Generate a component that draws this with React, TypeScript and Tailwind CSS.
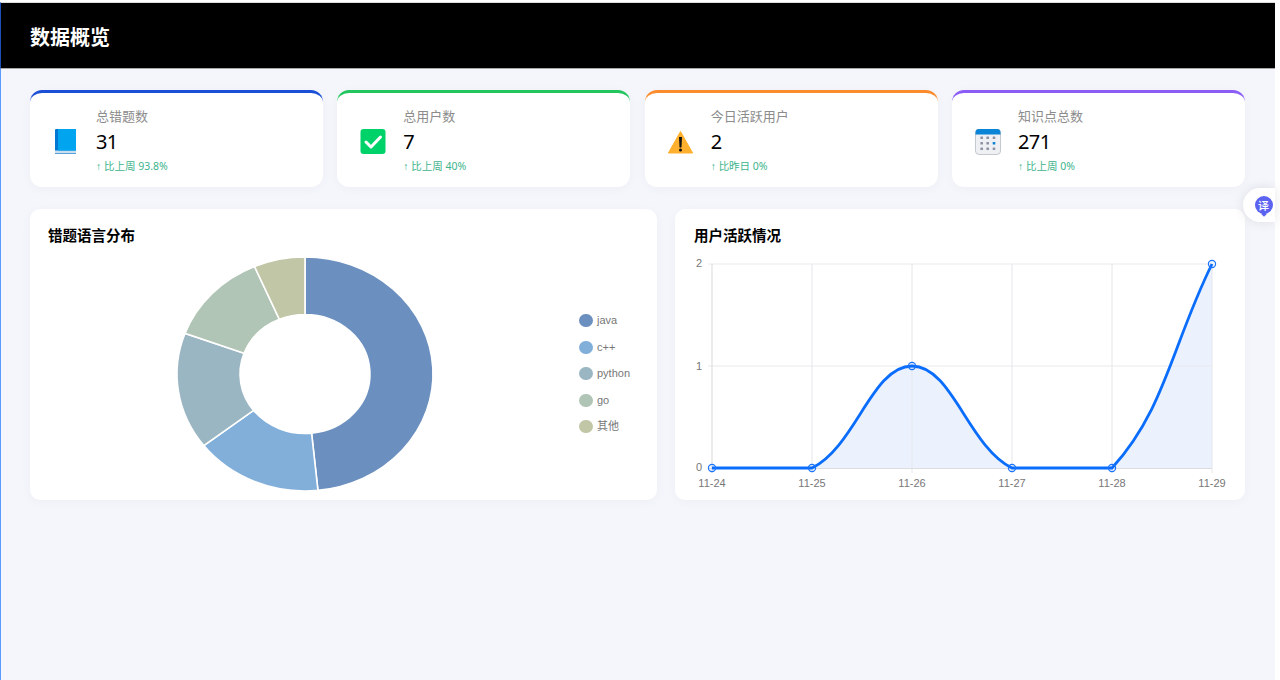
const statCards = [
  { label: '总错题数', value: '31', trend: '比上周 93.8%', border: 'border-t-[#1a4fd6]', icon: 'book' },
  { label: '总用户数', value: '7', trend: '比上周 40%', border: 'border-t-[#22c55e]', icon: 'check' },
  { label: '今日活跃用户', value: '2', trend: '比昨日 0%', border: 'border-t-[#fb8c2e]', icon: 'warning' },
  { label: '知识点总数', value: '271', trend: '比上周 0%', border: 'border-t-[#8b5cf6]', icon: 'calendar' },
]

const languages = [
  { name: 'java', count: 15, color: '#6b8fbf', dot: 'bg-[#6b8fbf]' },
  { name: 'c++', count: 5, color: '#82afda', dot: 'bg-[#82afda]' },
  { name: 'python', count: 5, color: '#9bb6c3', dot: 'bg-[#9bb6c3]' },
  { name: 'go', count: 4, color: '#b0c5b5', dot: 'bg-[#b0c5b5]' },
  { name: '其他', count: 2, color: '#c1c6a7', dot: 'bg-[#c1c6a7]' },
]

const days = [
  { label: '11-24', x: 712, y: 468 },
  { label: '11-25', x: 812, y: 468 },
  { label: '11-26', x: 912, y: 366 },
  { label: '11-27', x: 1012, y: 468 },
  { label: '11-28', x: 1112, y: 468 },
  { label: '11-29', x: 1212, y: 264 },
]

const linePath =
  'M712 468 L812 468 C856 446 872 366 912 366 C952 366 968 446 1012 468 L1112 468 C1165 410 1172 345 1212 264'

const StatIcon = ({ name }: { name: string }) => {
  if (name === 'book') {
    return (
      <svg width="26" height="26" viewBox="0 0 26 26">
        <path d="M2 1a1 1 0 0 1 1-1h19a1 1 0 0 1 1 1v24H3a1 1 0 0 1-1-1z" fill="#0078d4" />
        <rect x="2" y="21.5" width="21" height="3.5" fill="#c9dff0" />
        <rect x="2" y="24.2" width="21" height="0.8" fill="#3f8fcf" />
        <path d="M5 0h17a1 1 0 0 1 1 1v20.5H5z" fill="#00a4ef" />
      </svg>
    )
  }
  if (name === 'check') {
    return (
      <svg width="26" height="26" viewBox="0 0 26 26">
        <rect width="25" height="25" x="0.5" y="0" rx="3" fill="#00d26a" />
        <path d="M6 13l5 5 9.5-10" fill="none" stroke="#fff" strokeWidth="3" strokeLinecap="round" strokeLinejoin="round" />
      </svg>
    )
  }
  if (name === 'warning') {
    return (
      <svg width="26" height="26" viewBox="0 0 26 26">
        <path d="M12.5 2.5L24.6 24H.4z" fill="#ffb02e" stroke="#ffb02e" strokeLinejoin="round" />
        <path d="M11 8h3l-.5 10.5h-2z" fill="#111" />
        <circle cx="12.5" cy="21" r="1.5" fill="#111" />
      </svg>
    )
  }
  return (
    <svg width="26" height="26" viewBox="0 0 26 26">
      <rect x="0.5" y="0" width="25" height="25.5" rx="3.5" fill="#eef0f4" stroke="#c4c8cf" />
      <path d="M0.5 5.5V3.5A3.5 3.5 0 0 1 4 0h18a3.5 3.5 0 0 1 3.5 3.5v2z" fill="#0a84d6" />
      {[5.4, 11.4, 17.7].map((x) =>
        [7.4, 13, 18.4].map((y) => (
          <rect key={`${x}-${y}`} x={x} y={y} width="2.6" height="2.6" rx="0.5" fill={x === 17.7 && y === 13 ? '#0a84d6' : '#8e93a3'} />
        ))
      )}
    </svg>
  )
}

// donut is stretched in the screenshot, so radii differ per axis
const slicePath = (start: number, end: number) => {
  const cx = 305
  const cy = 374
  const point = (angle: number, rx: number, ry: number) =>
    `${(cx + rx * Math.sin(angle)).toFixed(2)} ${(cy - ry * Math.cos(angle)).toFixed(2)}`
  const large = end - start > Math.PI ? 1 : 0
  return `M${point(start, 128, 117)} A128 117 0 ${large} 1 ${point(end, 128, 117)} L${point(end, 65, 59.5)} A65 59.5 0 ${large} 0 ${point(start, 65, 59.5)} Z`
}

const Donut = () => {
  const total = languages.reduce((sum, item) => sum + item.count, 0)
  let current = 0
  return (
    <svg className="w-[515px] h-[245px] flex-none" viewBox="48 250 515 245">
      {languages.map((item) => {
        const start = (current / total) * Math.PI * 2
        current += item.count
        const end = (current / total) * Math.PI * 2
        return <path key={item.name} d={slicePath(start, end)} fill={item.color} stroke="#fff" strokeWidth="1.6" />
      })}
    </svg>
  )
}

const LineChart = () => (
  <svg className="w-[540px] h-[245px] block" viewBox="694 250 540 245">
    <path d={`${linePath} L1212 468 Z`} fill="#ebf2fd" />
    {[264, 366].map((y) => (
      <line key={y} x1="708" x2="1212" y1={y} y2={y} stroke="#e9e9ec" strokeWidth="1" />
    ))}
    {days.slice(1).map((day) => (
      <line key={day.x} x1={day.x} x2={day.x} y1="264" y2="473" stroke="#e6e6ea" strokeWidth="1" />
    ))}
    <line x1="712" x2="712" y1="264" y2="473" stroke="#d9d9dc" strokeWidth="1" />
    <line x1="708" x2="1212" y1="468.5" y2="468.5" stroke="#dcdde0" strokeWidth="1" />
    <path d={linePath} fill="none" stroke="#0b6dfb" strokeWidth="2.8" />
    {days.map((day) => (
      <circle key={day.label} cx={day.x} cy={day.y} r="3.6" fill="#0b6dfb" fillOpacity="0.06" stroke="#1a75fb" strokeWidth="1.2" />
    ))}
    {days.map((day) => (
      <text key={day.label} x={day.x} y="487" textAnchor="middle" fontSize="11" fill="#777" fontFamily="'Liberation Sans', sans-serif">
        {day.label}
      </text>
    ))}
    {[
      ['2', 267],
      ['1', 370],
      ['0', 471],
    ].map(([label, y]) => (
      <text key={label} x="702" y={y} textAnchor="end" fontSize="11" fill="#777" fontFamily="'Liberation Sans', sans-serif">
        {label}
      </text>
    ))}
  </svg>
)

const App = () => {
  return (
    <div className="relative w-[1280px] h-[680px] overflow-hidden bg-white font-['Noto_Sans','Noto_Sans_CJK_SC',sans-serif]">
      <div className="w-[1275px] h-full pt-[2px] flex flex-col">
        <header className="h-[67px] flex-none flex items-center pl-[29px] pt-[4px] bg-black text-white text-[20px] font-bold border-l border-l-[#1d4fb8] border-t border-t-[#dcdcdc] border-b border-b-[#a8a8a8]">
          数据概览
        </header>
        <main className="flex-1 bg-[#f4f6fb] border-l border-l-[#5b9bff] pl-[29px] pr-[30px] pt-[21px]">
          <div className="grid grid-cols-4 gap-[14.3px]">
            {statCards.map((card) => (
              <div
                key={card.label}
                className={`h-[97px] flex items-center pl-[23px] bg-white rounded-[12px] border-t-[3px] shadow-[0_2px_12px_rgba(0,0,0,0.03)] ${card.border}`}
              >
                <div className="w-[26px] flex-none flex mt-[4px]">
                  <StatIcon name={card.icon} />
                </div>
                <div className="ml-[17px] flex flex-col">
                  <span className="text-[13px] leading-[18px] text-[#8c8c8c]">{card.label}</span>
                  <span className="mt-[3px] text-[20px] leading-[28px] tracking-[-0.6px] text-black">{card.value}</span>
                  <span className="mt-[3px] text-[10.5px] leading-[15px] text-[#3db48c]">
                    <span className="font-['Liberation_Sans',sans-serif]">↑</span> {card.trend}
                  </span>
                </div>
              </div>
            ))}
          </div>
          <div className="mt-[22px] flex gap-[18px]">
            <section className="w-[627px] h-[291px] pl-[18px] pt-[17px] bg-white rounded-[10px] shadow-[0_2px_12px_rgba(0,0,0,0.03)]">
              <h2 className="text-[14.5px] leading-[18px] font-bold text-black">错题语言分布</h2>
              <div className="mt-[6px] flex">
                <Donut />
                <ul className="ml-[16px] mt-[64px] flex flex-col gap-[13.5px] font-['Liberation_Sans','Noto_Sans_CJK_SC',sans-serif] text-[11px] text-[#777]">
                  {languages.map((item) => (
                    <li key={item.name} className="h-[13px] flex items-center gap-[4px]">
                      <span className={`w-[14px] h-[13px] rounded-full ${item.dot}`} />
                      {item.name}
                    </li>
                  ))}
                </ul>
              </div>
            </section>
            <section className="flex-1 h-[291px] pl-[19px] pt-[17px] bg-white rounded-[10px] shadow-[0_2px_12px_rgba(0,0,0,0.03)]">
              <h2 className="text-[14.5px] leading-[18px] font-bold text-black">用户活跃情况</h2>
              <div className="mt-[6px]">
                <LineChart />
              </div>
            </section>
          </div>
        </main>
      </div>
      {/* translate widget floating over the page */}
      <div className="absolute left-[1243px] top-[188px] w-[32px] h-[34px] flex items-center justify-center pl-[9px] bg-white rounded-l-[17px] shadow-[0_0_12px_rgba(0,0,0,0.1)]">
        <span className="relative w-[18px] h-[18px] flex-none flex items-center justify-center rounded-full bg-[#5b63f0] text-white text-[11px] leading-none font-medium">
          <span className="absolute left-[7px] top-[15.5px] w-[4px] h-[4px] rotate-45 bg-[#5b63f0]" />
          <span className="relative">译</span>
        </span>
      </div>
    </div>
  )
}

export default App
